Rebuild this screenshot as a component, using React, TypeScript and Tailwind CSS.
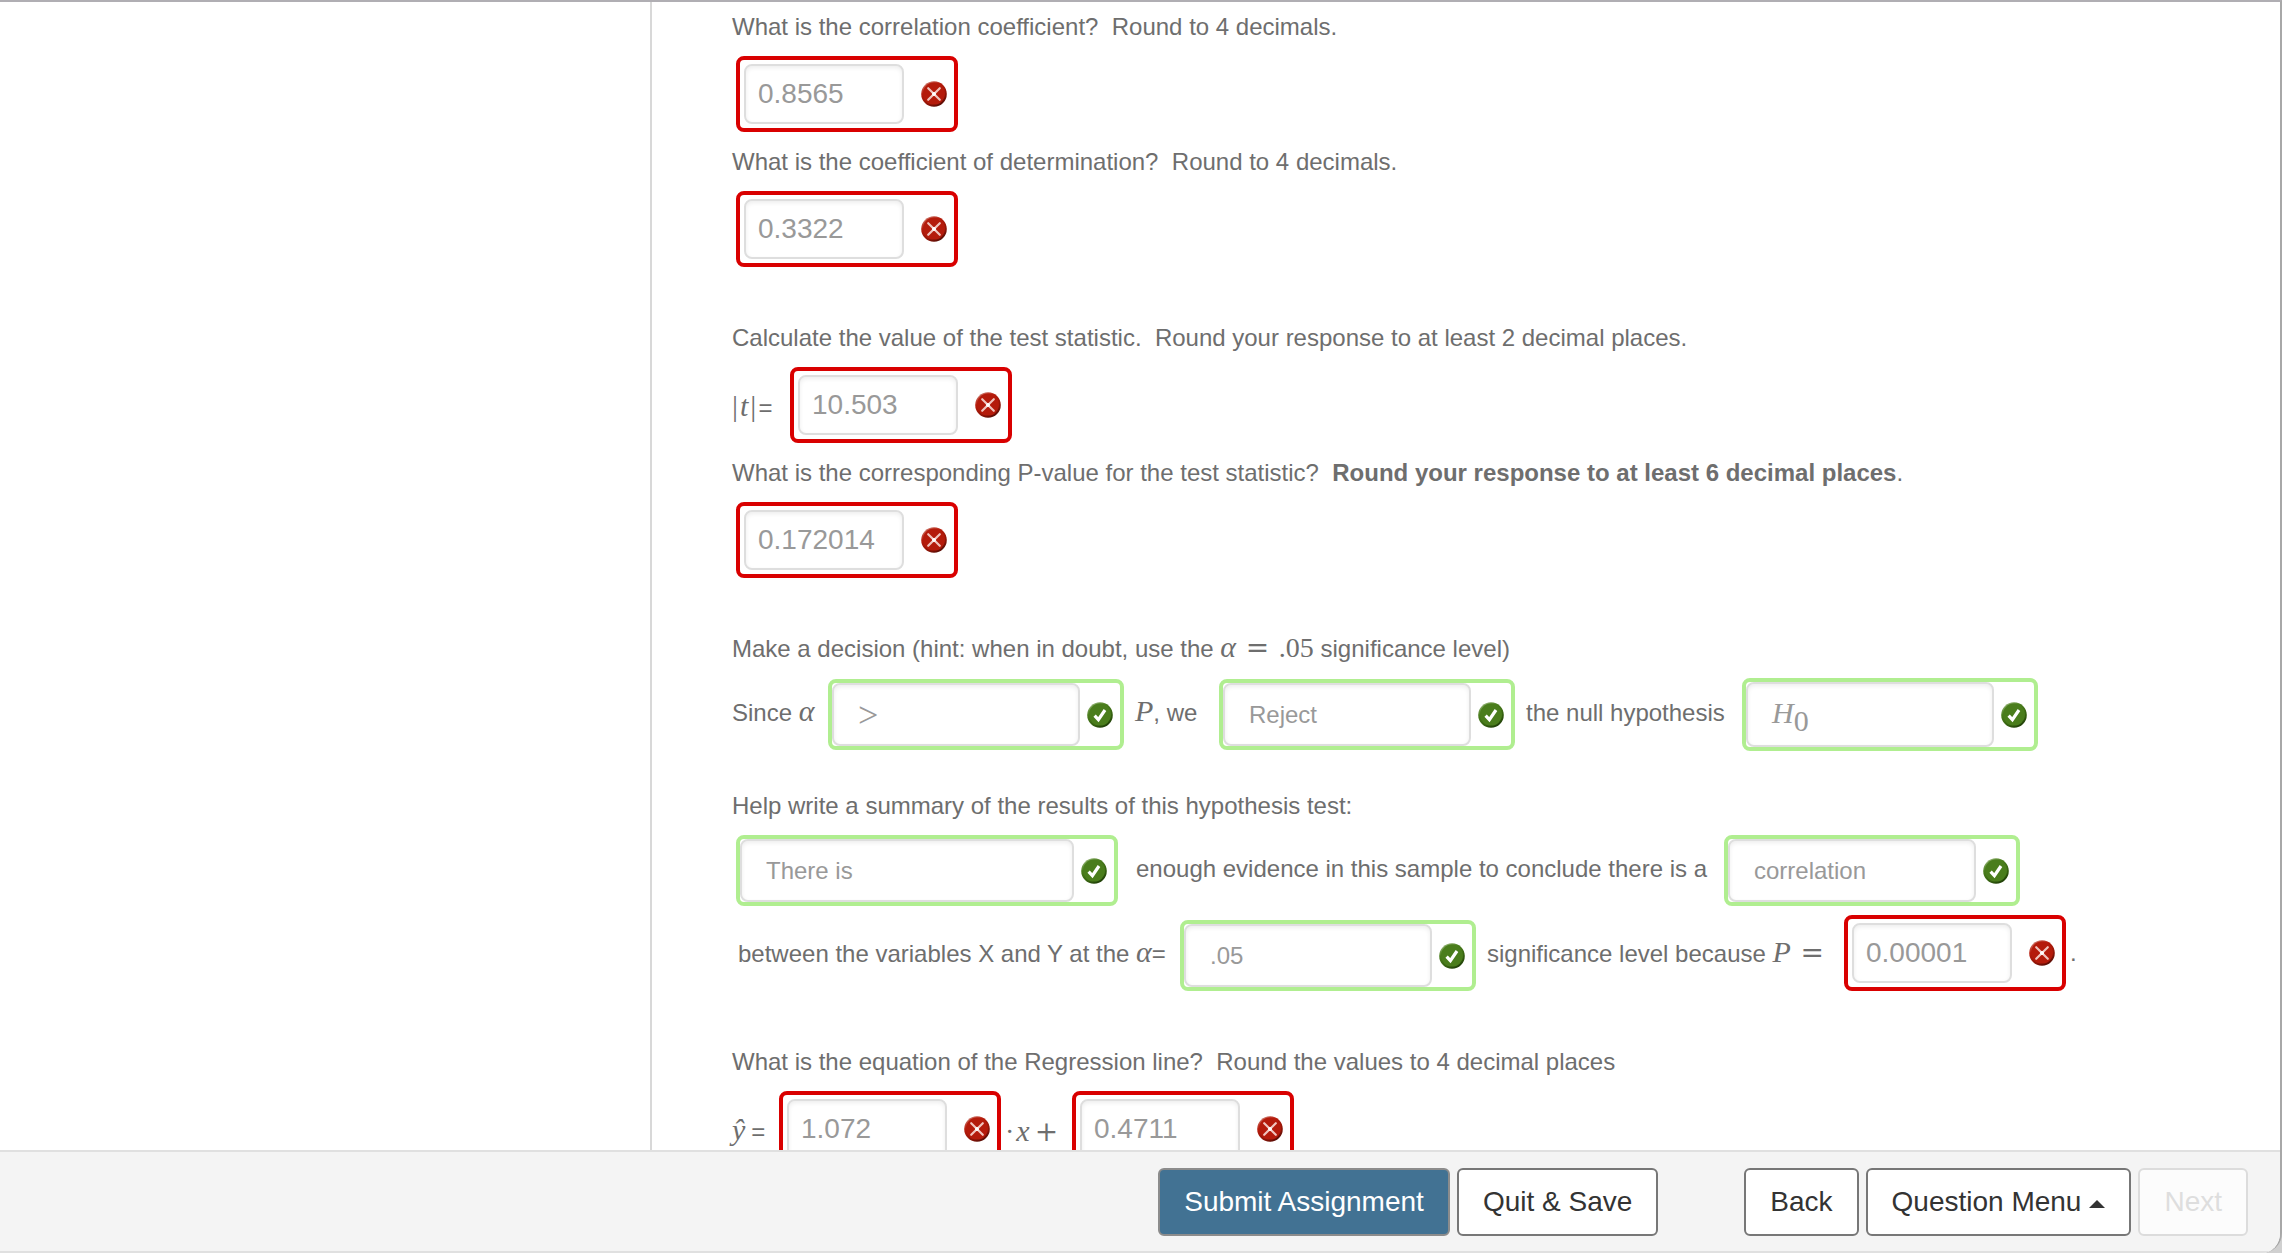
import React, { useState } from 'react';

type Status = 'correct' | 'wrong';

function StatusIcon({ status }: { status: Status }) {
  if (status === 'wrong') {
    return (
      <svg viewBox="0 0 28 28" className="w-7 h-7 shrink-0" role="img" aria-label="Incorrect">
        <defs>
          <linearGradient id="wrongFill" x1="0.2" y1="0" x2="0.8" y2="1">
            <stop offset="0" stopColor="#cf8478" />
            <stop offset="0.3" stopColor="#b71c0c" />
            <stop offset="0.7" stopColor="#8e1508" />
            <stop offset="1" stopColor="#4a0a04" />
          </linearGradient>
        </defs>
        <circle cx="14" cy="14" r="12.8" fill="url(#wrongFill)" />
        <circle cx="14" cy="13.6" r="11" fill="#b41b0b" />
        <path d="M8.2 8.2 19.8 19.8M19.8 8.2 8.2 19.8" stroke="#f0c4bd" strokeWidth="2.2" strokeLinecap="round" />
        <circle cx="14" cy="14" r="2" fill="#fff" />
      </svg>
    );
  }
  return (
    <svg viewBox="0 0 28 28" className="w-7 h-7 shrink-0" role="img" aria-label="Correct">
      <defs>
        <linearGradient id="rightFill" x1="0.2" y1="0" x2="0.8" y2="1">
          <stop offset="0" stopColor="#9dbb80" />
          <stop offset="0.3" stopColor="#4a7d1c" />
          <stop offset="0.7" stopColor="#356010" />
          <stop offset="1" stopColor="#1a3606" />
        </linearGradient>
      </defs>
      <circle cx="14" cy="14" r="12.8" fill="url(#rightFill)" />
      <circle cx="14" cy="13.6" r="11" fill="#4a7d1c" />
      <path d="M8.6 14.6 12.4 18.6 19 9" stroke="#fff" strokeWidth="3.2" fill="none" />
    </svg>
  );
}

function AnswerInput({ label, initial }: { label: string; initial: string }) {
  const [value, setValue] = useState(initial);
  return (
    <span className="inline-flex items-center justify-between shrink-0 w-[222px] h-[76px] p-1 pr-[6px] border-4 border-[#d90000] rounded-lg">
      <input
        type="text"
        aria-label={label}
        value={value}
        onChange={(e) => setValue(e.target.value)}
        className="w-40 h-[60px] px-3 border-2 border-[#dedede] rounded-lg text-[28px] text-[#999] bg-white shadow-[inset_0_2px_4px_rgba(0,0,0,0.07)] outline-none"
      />
      <StatusIcon status="wrong" />
    </span>
  );
}

function AnswerSelect({
  label,
  options,
  wide,
  math,
}: {
  label: string;
  options: string[];
  wide?: boolean;
  math?: boolean;
}) {
  return (
    <span
      className={`inline-flex items-center shrink-0 h-[71px] pr-[6px] border-4 border-[#b0ee90] rounded-lg justify-between ${
        wide ? 'w-[382px]' : 'w-[296px]'
      }`}
    >
      <select
        aria-label={label}
        className={`appearance-none h-full pl-6 border-2 border-[#dedede] rounded-lg text-[#999] bg-white shadow-[inset_0_2px_4px_rgba(0,0,0,0.07)] outline-none ${
          wide ? 'w-[334px]' : 'w-[248px]'
        } ${math ? 'text-[36px] font-["Liberation_Serif",serif]' : 'text-2xl'}`}
      >
        {options.map((o) => (
          <option key={o}>{o}</option>
        ))}
      </select>
      <StatusIcon status="correct" />
    </span>
  );
}

function Prompt({ children }: { children: React.ReactNode }) {
  return <p className="leading-[59px] whitespace-pre-wrap">{children}</p>;
}

// math variable, number and operator
function M({ children }: { children: React.ReactNode }) {
  return <i className='font-["Liberation_Serif",serif] text-[30px] leading-none'>{children}</i>;
}

function N({ children }: { children: React.ReactNode }) {
  return <span className='font-["Liberation_Serif",serif] text-[28px] leading-none'>{children}</span>;
}

function Op({ children }: { children: React.ReactNode }) {
  return <span className='font-["DejaVu_Serif",serif] text-[28px] leading-none mx-[3px]'>{children}</span>;
}

export default function App() {
  return (
    <div className='h-screen flex flex-col overflow-hidden bg-[#d0d0d0] font-["Liberation_Sans",Arial,sans-serif] text-2xl text-[#6e6e6e]'>
      <div className="flex-1 min-h-0 flex flex-col bg-white border-t-2 border-r-2 border-t-[#b0aeb3] border-r-[#a8a8a8] rounded-br-[20px] overflow-hidden">
        <div className="flex-1 min-h-0 flex">
          <aside className="w-[652px] shrink-0 border-r-2 border-[#d8d8d8]" />

          <main className="flex-1 min-w-0 overflow-y-auto [scrollbar-width:none] pl-20">
            <section className="-mt-[5px]">
              <Prompt>{'What is the correlation coefficient?  Round to 4 decimals.'}</Prompt>
              <div className="flex pl-1">
                <AnswerInput label="Correlation coefficient" initial="0.8565" />
              </div>
              <Prompt>{'What is the coefficient of determination?  Round to 4 decimals.'}</Prompt>
              <div className="flex pl-1">
                <AnswerInput label="Coefficient of determination" initial="0.3322" />
              </div>
            </section>

            <section className="mt-[41px]">
              <Prompt>{'Calculate the value of the test statistic.  Round your response to at least 2 decimal places.'}</Prompt>
              <div className="flex items-center">
                <span className="flex items-baseline w-[58px] gap-[2px] pt-1">
                  <M>
                    <span className="not-italic">|</span>
                  </M>
                  <M>t</M>
                  <M>
                    <span className="not-italic">|</span>
                  </M>
                  =
                </span>
                <AnswerInput label="Test statistic" initial="10.503" />
              </div>
              <Prompt>
                {'What is the corresponding P-value for the test statistic?  '}
                <b>Round your response to at least 6 decimal places</b>.
              </Prompt>
              <div className="flex pl-1">
                <AnswerInput label="P-value" initial="0.172014" />
              </div>
            </section>

            <section className="mt-[41px]">
              <Prompt>
                Make a decision (hint: when in doubt, use the <M>α</M> <Op>=</Op> <N>.05</N> significance level)
              </Prompt>
              <div className="flex items-center">
                <span className="w-24 pb-1">
                  Since <M>α</M>
                </span>
                <AnswerSelect label="Comparison" options={['>', '<']} math />
                <span className="w-[95px] pl-[11px] pb-1">
                  <M>P</M>, we
                </span>
                <AnswerSelect label="Decision" options={['Reject', 'Fail to reject']} />
                <span className="w-[227px] pl-[11px] pb-1">the null hypothesis</span>
                <span className="inline-flex items-center justify-between shrink-0 w-[296px] h-[73px] pr-[6px] border-4 border-[#b0ee90] rounded-lg">
                  <button
                    type="button"
                    aria-haspopup="listbox"
                    aria-label="Hypothesis"
                    className='w-[248px] h-full pl-6 pb-1 text-left border-2 border-[#dedede] rounded-lg text-[#999] text-[30px] leading-none font-["Liberation_Serif",serif] shadow-[inset_0_2px_4px_rgba(0,0,0,0.07)]'
                  >
                    <i>H</i>
                    <sub className="text-[30px] bottom-[-8px]">0</sub>
                  </button>
                  <StatusIcon status="correct" />
                </span>
              </div>
            </section>

            <section className="mt-[25px]">
              <Prompt>Help write a summary of the results of this hypothesis test:</Prompt>
              <div className="flex items-center pl-1">
                <AnswerSelect label="Evidence" options={['There is', 'There is not']} wide />
                <span className="w-[606px] pl-[18px] pb-1">enough evidence in this sample to conclude there is a</span>
                <AnswerSelect label="Relationship" options={['correlation', 'difference']} />
              </div>
              <div className="flex items-center pl-[6px] mt-2">
                <span className="w-[442px] pt-[2px]">
                  between the variables X and Y at the <M>α</M>=
                </span>
                <span className="flex mt-[6px]">
                  <AnswerSelect label="Significance level" options={['.05', '.01']} />
                </span>
                <span className="w-[368px] pl-[11px] pt-[2px]">
                  significance level because <M>P</M> <Op>=</Op>
                </span>
                <AnswerInput label="Final P-value" initial="0.00001" />
                <span className="pl-1">.</span>
              </div>
            </section>

            <section className="mt-[41px]">
              <Prompt>{'What is the equation of the Regression line?  Round the values to 4 decimal places'}</Prompt>
              <div className="flex items-center">
                <span className="flex items-baseline w-[47px] gap-[6px] pt-1">
                  <M>ŷ</M>
                  <span>=</span>
                </span>
                <AnswerInput label="Slope" initial="1.072" />
                <span className="flex items-baseline w-[71px] pl-1 gap-[2px] pt-1">
                  <N>·</N>
                  <M>x</M>
                  <Op>+</Op>
                </span>
                <AnswerInput label="Intercept" initial="0.4711" />
              </div>
            </section>
          </main>
        </div>

        <footer className="flex-none flex justify-end items-start h-[103px] pt-4 pr-8 bg-[#f4f4f4] border-y-2 border-[#e0e0e0] text-[28px] text-[#333]">
          <div className="flex gap-[7px] mr-[86px]">
            <button type="button" className="h-[68px] px-6 rounded-md border-2 border-[#8c8c8c] bg-[#427293] text-white">
              Submit Assignment
            </button>
            <button type="button" className="h-[68px] px-6 rounded-md border-2 border-[#777] bg-white">
              Quit &amp; Save
            </button>
          </div>
          <div className="flex gap-[7px]">
            <button type="button" className="h-[68px] px-6 rounded-md border-2 border-[#777] bg-white">
              Back
            </button>
            <button type="button" className="flex items-center gap-2 h-[68px] px-6 rounded-md border-2 border-[#777] bg-white">
              Question Menu
              <svg viewBox="0 0 16 8" className="w-4 h-2 mt-1" aria-hidden="true">
                <path d="M8 0 16 8H0z" fill="#333" />
              </svg>
            </button>
            <button type="button" disabled className="h-[68px] px-6 rounded-md border-2 border-[#dcdcdc] bg-[#fcfcfc] text-[#dedede]">
              Next
            </button>
          </div>
        </footer>
      </div>
    </div>
  );
}
